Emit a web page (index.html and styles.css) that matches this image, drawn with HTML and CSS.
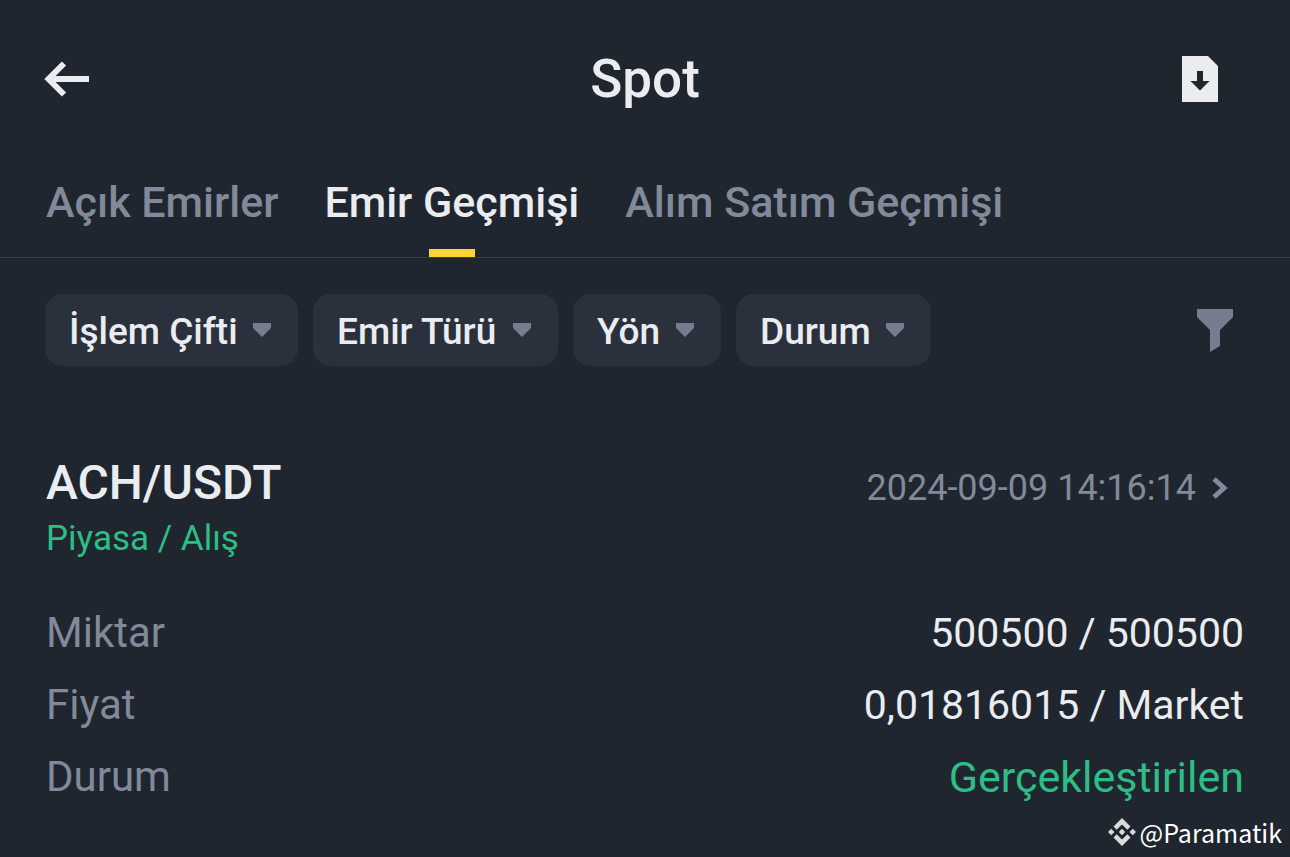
FILE: index.html
```
<!DOCTYPE html>
<html lang="tr">
<head>
    <meta charset="UTF-8">
    <meta name="viewport" content="width=device-width, initial-scale=1.0">
    <title>Spot</title>
    <link rel="stylesheet" href="styles.css">
</head>
<body>

    <!-- Top bar -->
    <header class="topbar">
        <button class="icon-btn" type="button" aria-label="Geri">
            <svg width="46" height="36" viewBox="0 0 46 36" fill="none" stroke="currentColor" stroke-width="6">
                <path d="M45 18H5M20 2.500L4.500 18L20 33.500"/>
            </svg>
        </button>
        <h1 class="title">Spot</h1>
        <button class="icon-btn icon-btn-end" type="button" aria-label="Dışa aktar">
            <svg width="36" height="46" viewBox="0 0 36 46" fill="currentColor">
                <path fill-rule="evenodd" d="M0 0H26L36 10V46H0ZM15 15V25H8.500L18 34.500L27.500 25H21V15Z"/>
            </svg>
        </button>
    </header>

    <!-- Tabs -->
    <nav class="tabs">
        <a class="tab" href="#acik">Açık Emirler</a>
        <a class="tab active" href="#emir" aria-current="page">Emir Geçmişi</a>
        <a class="tab" href="#alim">Alım Satım Geçmişi</a>
    </nav>

    <!-- Filters -->
    <div class="filters">
        <div class="chip">
            <select class="chip-select" aria-label="İşlem Çifti"><option>İşlem Çifti</option></select>
            <svg class="caret" width="18" height="14" viewBox="0 0 18 14"><path d="M0 0H18V5L9 14L0 5Z"/></svg>
        </div>
        <div class="chip">
            <select class="chip-select" aria-label="Emir Türü"><option>Emir Türü</option></select>
            <svg class="caret" width="18" height="14" viewBox="0 0 18 14"><path d="M0 0H18V5L9 14L0 5Z"/></svg>
        </div>
        <div class="chip">
            <select class="chip-select" aria-label="Yön"><option>Yön</option></select>
            <svg class="caret" width="18" height="14" viewBox="0 0 18 14"><path d="M0 0H18V5L9 14L0 5Z"/></svg>
        </div>
        <div class="chip">
            <select class="chip-select" aria-label="Durum"><option>Durum</option></select>
            <svg class="caret" width="18" height="14" viewBox="0 0 18 14"><path d="M0 0H18V5L9 14L0 5Z"/></svg>
        </div>
        <button class="icon-btn filter-btn" type="button" aria-label="Filtrele">
            <svg width="36" height="43" viewBox="0 0 36 43" fill="currentColor">
                <path d="M0 0H36V8L23 21V37L13 43V21L0 8Z"/>
            </svg>
        </button>
    </div>

    <!-- Order -->
    <main class="order">
        <div class="order-head">
            <h2 class="pair">ACH/USDT</h2>
            <a class="order-date" href="#detay">
                <span>2024-09-09 14:16:14</span>
                <svg width="16" height="22" viewBox="0 0 16 22" fill="none" stroke="currentColor" stroke-width="5">
                    <path d="M2 2L12 11L2 20"/>
                </svg>
            </a>
        </div>
        <p class="side">Piyasa / Alış</p>

        <dl class="details">
            <div class="row"><dt>Miktar</dt><dd>500500 / 500500</dd></div>
            <div class="row"><dt>Fiyat</dt><dd>0,01816015 / Market</dd></div>
            <div class="row"><dt>Durum</dt><dd class="filled">Gerçekleştirilen</dd></div>
        </dl>
    </main>

    <footer class="credit">
        <svg width="28" height="28" viewBox="0 0 28 28" fill="currentColor">
            <path d="M14 0L22.500 8.500L19.300 11.700L14 6.400L8.700 11.700L5.500 8.500Z"/>
            <path d="M14 28L22.500 19.500L19.300 16.300L14 21.600L8.700 16.300L5.500 19.500Z"/>
            <path d="M14 10.800L17.200 14L14 17.200L10.800 14Z"/>
            <path d="M3.200 10.800L6.400 14L3.200 17.200L0 14Z"/>
            <path d="M24.800 10.800L28 14L24.800 17.200L21.600 14Z"/>
        </svg>
        <span>@Paramatik</span>
    </footer>

</body>
</html>
```
FILE: styles.css
```
* {
    box-sizing: border-box;
}

body {
    margin: 0;
    background-color: #1f262f;
    color: #eaecef;
    font-family: Roboto, "Noto Sans", sans-serif;
}

h1, h2, p, dl, dd {
    margin: 0;
}

svg {
    display: block;
}

a {
    color: inherit;
    text-decoration: none;
}

.icon-btn {
    padding: 0;
    border: none;
    background: none;
    color: inherit;
    cursor: pointer;
}

/* Top bar */
.topbar {
    display: grid;
    grid-template-columns: 1fr auto 1fr;
    align-items: center;
    height: 157px;
    padding: 0 72px 0 44px;
}

.topbar .icon-btn {
    justify-self: start;
}

.topbar .icon-btn-end {
    justify-self: end;
}

.title {
    padding-left: 28px;
    font-size: 53px;
    font-weight: 500;
    line-height: 60px;
}

/* Tabs */
.tabs {
    display: flex;
    gap: 46px;
    padding: 0 46px;
    border-bottom: 1px solid #333b47;
    color: #828a9a;
}

.tab {
    position: relative;
    padding: 20px 0 30px;
    font-size: 43px;
    font-weight: 500;
    line-height: 50px;
    white-space: nowrap;
}

.tab.active {
    color: #eaecef;
}

.tab.active::after {
    content: "";
    position: absolute;
    bottom: 0;
    left: calc(50% - 23px);
    width: 46px;
    height: 8px;
    background-color: #fcd535;
}

/* Filters */
.filters {
    display: flex;
    align-items: center;
    gap: 15px;
    padding: 36px 57px 0 45px;
}

.chip {
    display: grid;
    align-items: center;
    border-radius: 18px;
    background-color: #2a313c;
}

.chip-select {
    grid-area: 1 / 1;
    height: 72px;
    padding: 2px 60px 0 24px;
    border: none;
    background: none;
    color: #eaecef;
    font-family: inherit;
    font-size: 37px;
    font-weight: 500;
    appearance: none;
}

.caret {
    grid-area: 1 / 1;
    justify-self: end;
    margin-right: 27px;
    fill: #757d8e;
    pointer-events: none;
}

.filter-btn {
    margin-left: auto;
    color: #757d8e;
}

/* Order */
.order {
    padding: 87px 46px 0;
}

.order-head {
    display: flex;
    justify-content: space-between;
    align-items: flex-end;
}

.pair {
    font-size: 48px;
    font-weight: 500;
    line-height: 60px;
}

.order-date {
    display: flex;
    align-items: center;
    gap: 16px;
    padding-right: 16px;
    color: #828a9a;
    font-size: 36px;
    line-height: 50px;
}

.side {
    color: #2ebd85;
    font-size: 35px;
    line-height: 52px;
}

.details {
    padding-top: 32px;
    font-size: 42px;
    line-height: 72px;
}

.row {
    display: flex;
    justify-content: space-between;
}

.row dt {
    color: #828a9a;
}

.row dd {
    font-size: 41px;
}

.row .filled {
    color: #2ebd85;
    font-size: 43px;
}

.credit {
    display: flex;
    justify-content: flex-end;
    align-items: center;
    gap: 4px;
    padding: 1px 8px 0;
    color: #ffffff;
    font-family: "Noto Sans CJK SC", sans-serif;
    font-size: 25px;
    line-height: 36px;
}

.credit svg {
    color: #d9dadc;
}
```
